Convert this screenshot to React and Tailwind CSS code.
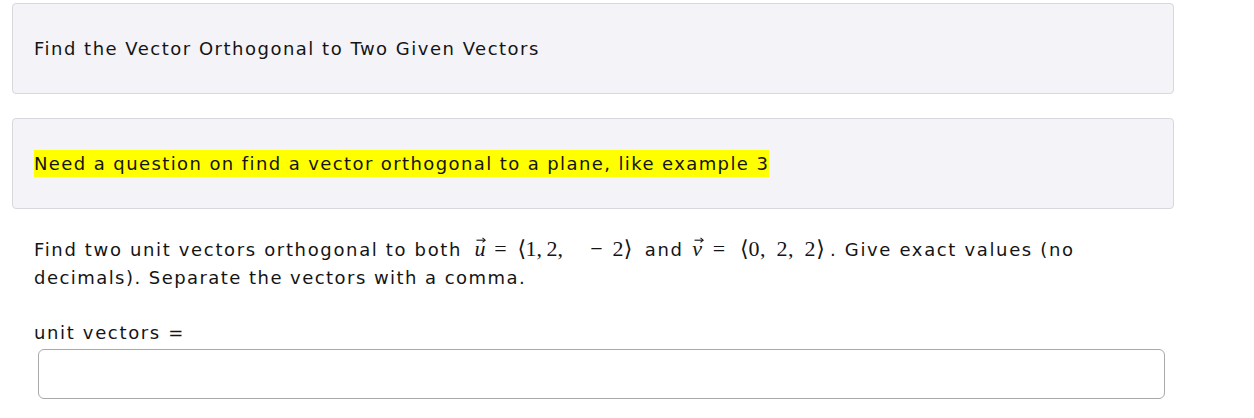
import React from "react";

const sans = { fontFamily: '"DejaVu Sans", "Noto Sans", sans-serif' };

function Arrow() {
  return (
    <svg className="absolute left-[3px] top-[-2px]" width="10" height="6" viewBox="0 0 10 6" fill="none" stroke="#111" strokeWidth="1.1">
      <path d="M0.5 3.2 H9" />
      <path d="M6.5 0.8 L9.2 3.2 L6.5 5.4" />
    </svg>
  );
}

function T({ className, children }) {
  return <span className={"inline-block text-center " + className}>{children}</span>;
}

function C({ className }) {
  return <span className={"inline-block text-left " + className}>,</span>;
}

function Vec({ name, className }) {
  return (
    <span className={"relative inline-block text-center " + className}>
      <span className="italic">{name}</span>
      <Arrow />
    </span>
  );
}

function MathTxt({ className, children }) {
  return (
    <span
      className={
        "font-['Liberation_Serif','DejaVu_Serif',serif] text-[22px] leading-[20px] tracking-normal whitespace-nowrap " +
        className
      }
    >
      {children}
    </span>
  );
}

export default function App() {
  return (
    <div className="w-[1254px] h-[418px] bg-white text-[18px] text-[#141414] pt-[3px] tracking-[1.5px]" style={sans}>
      <div className="ml-[12px] w-[1162px] h-[91px] flex items-center rounded-[4px] border border-[#d7d7dc] bg-[#f3f3f8] pl-[21px]">
        <span>Find the Vector Orthogonal to Two Given Vectors</span>
      </div>
      <div className="ml-[12px] mt-[24px] w-[1162px] h-[91px] flex items-center rounded-[4px] border border-[#d7d7dc] bg-[#f3f3f8] pl-[21px]">
        <span className="bg-[#ffff00] tracking-[1.4px]">Need a question on find a vector orthogonal to a plane, like example 3</span>
      </div>
      <div className="ml-[34px] w-[1120px] mt-[27px] leading-[28px] tracking-[1.65px]">
        <p>
          Find two unit vectors orthogonal to both{" "}
          <MathTxt className="ml-[4px] mr-[5px]">
            <Vec name="u" className="w-[13px]" />
            <T className="ml-[5px] w-[18px]">=</T>
            <T className="ml-[8px] w-[8px]">⟨</T>
            <T className="w-[11px]">1</T>
            <C className="w-[10px]" />
            <T className="w-[11px]">2</T>
            <C className="w-[6px]" />
            <T className="ml-[25px] w-[16px]">−</T>
            <T className="ml-[8px] w-[11px]">2</T>
            <T className="w-[9px]">⟩</T>
          </MathTxt>{" "}
          and{" "}
          <MathTxt className="mr-[5px]">
            <Vec name="v" className="w-[12px]" />
            <T className="ml-[7px] w-[18px]">=</T>
            <T className="ml-[12px] w-[8px]">⟨</T>
            <T className="w-[12px]">0</T>
            <C className="w-[16px]" />
            <T className="w-[12px]">2</T>
            <C className="w-[16px]" />
            <T className="w-[12px]">2</T>
            <T className="w-[9px]">⟩</T>
          </MathTxt>
          . Give exact values (no{" "}
          <span className="tracking-[1.45px]">decimals). Separate the vectors with a comma.</span>
        </p>
        <p className="mt-[27px]">unit vectors =</p>
      </div>
      <div className="ml-[38px] mt-[2px] w-[1127px] h-[50px] rounded-[6px] border border-[#a9a9a9] bg-white" />
    </div>
  );
}
